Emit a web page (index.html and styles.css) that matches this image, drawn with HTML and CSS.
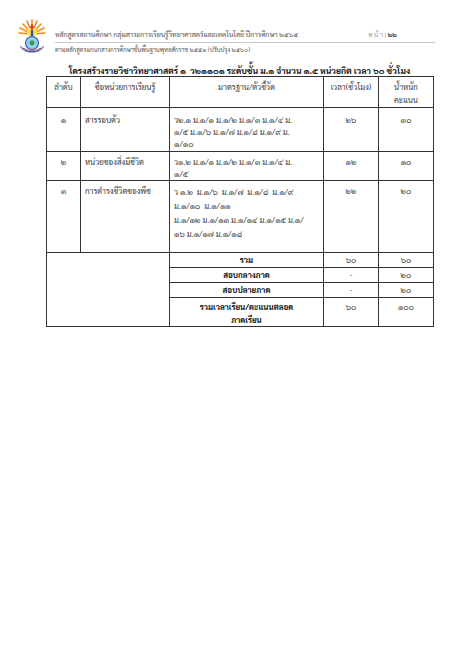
FILE: index.html
```html
<!DOCTYPE html>
<html lang="th">
<head>
<meta charset="utf-8">
<link rel="stylesheet" href="styles.css">
</head>
<body>
<div class="page">
  <div class="header">
    <svg class="logo" viewBox="0 0 28 36" width="28" height="36">
      <g stroke="#f08a1c" stroke-width="1.6" stroke-linecap="round">
        <line x1="14" y1="16" x2="14" y2="2"/>
        <line x1="14" y1="16" x2="9" y2="3"/>
        <line x1="14" y1="16" x2="19" y2="3"/>
        <line x1="14" y1="16" x2="5" y2="6"/>
        <line x1="14" y1="16" x2="23" y2="6"/>
        <line x1="14" y1="16" x2="2" y2="10"/>
        <line x1="14" y1="16" x2="26" y2="10"/>
        <line x1="14" y1="16" x2="1" y2="15"/>
        <line x1="14" y1="16" x2="27" y2="15"/>
      </g>
      <circle cx="14" cy="14" r="5" fill="#fde24a"/>
      <path d="M12 9 Q14 4 16 9 Q15 12 14 12 Q13 12 12 9Z" fill="#e8312a"/>
      <rect x="12.8" y="12" width="2.4" height="12" fill="#2b5fb0"/>
      <circle cx="14" cy="25" r="6.5" fill="#8fd0ef" stroke="#2b5fb0" stroke-width="1.2"/>
      <circle cx="14" cy="25" r="2.4" fill="#3f8f4a"/>
      <path d="M2 27 Q6 33 14 33 Q22 33 26 27 L25 30 Q20 35 14 34.5 Q8 35 3 30Z" fill="#2b5fb0"/>
      <path d="M5 30 Q14 35 23 30" stroke="#e8312a" stroke-width="0.8" fill="none"/>
    </svg>
    <div class="header-text">
      <div class="hline1">
        <span>หลักสูตรสถานศึกษา กลุ่มสาระการเรียนรู้วิทยาศาสตร์และเทคโนโลยี  ปีการศึกษา ๒๕๖๕</span>
        <span class="pageno">ห น้ า | <b>๒๒</b></span>
      </div>
      <div class="hline2">ตามหลักสูตรแกนกลางการศึกษาขั้นพื้นฐานพุทธศักราช ๒๕๕๑ (ปรับปรุง ๒๕๖๐)</div>
    </div>
  </div>

  <div class="title">โครงสร้างรายวิชาวิทยาศาสตร์ ๑&nbsp;&nbsp;ว๒๑๑๐๑ ระดับชั้น ม.๑ จำนวน ๑.๕ หน่วยกิต เวลา ๖๐ ชั่วโมง</div>

  <table class="course">
    <colgroup>
      <col class="c1"><col class="c2"><col class="c3"><col class="c4"><col class="c5">
    </colgroup>
    <tr class="r-head">
      <th>ลำดับ</th>
      <th>ชื่อหน่วยการเรียนรู้</th>
      <th>มาตรฐาน/ตัวชี้วัด</th>
      <th>เวลา(ชั่วโมง)</th>
      <th>น้ำหนัก<br>คะแนน</th>
    </tr>
    <tr class="r1">
      <td class="center">๑</td>
      <td>สารรอบตัว</td>
      <td>ว๒.๑ ม.๑/๑ ม.๑/๒ ม.๑/๓ ม.๑/๔ ม.<br>๑/๕ ม.๑/๖ ม.๑/๗ ม.๑/๘ ม.๑/๙ ม.<br>๑/๑๐</td>
      <td class="center">๒๖</td>
      <td class="center">๓๐</td>
    </tr>
    <tr class="r2">
      <td class="center">๒</td>
      <td>หน่วยของสิ่งมีชีวิต</td>
      <td>ว๑.๒ ม.๑/๑ ม.๑/๒ ม.๑/๓ ม.๑/๔ ม.<br>๑/๕</td>
      <td class="center">๑๒</td>
      <td class="center">๑๐</td>
    </tr>
    <tr class="r3">
      <td class="center">๓</td>
      <td>การดำรงชีวิตของพืช</td>
      <td class="loose">ว ๑.๒&nbsp;&nbsp;ม.๑/๖&nbsp;&nbsp;ม.๑/๗&nbsp;&nbsp;ม.๑/๘&nbsp;&nbsp;ม.๑/๙<br>ม.๑/๑๐&nbsp;&nbsp;ม.๑/๑๑<br>ม.๑/๑๒ ม.๑/๑๓ ม.๑/๑๔ ม.๑/๑๕ ม.๑/<br>๑๖ ม.๑/๑๗ ม.๑/๑๘</td>
      <td class="center">๒๒</td>
      <td class="center">๒๐</td>
    </tr>
    <tr class="rs">
      <td colspan="2" rowspan="4"></td>
      <td class="label">รวม</td>
      <td class="center">๖๐</td>
      <td class="center">๖๐</td>
    </tr>
    <tr class="rs">
      <td class="label">สอบกลางภาค</td>
      <td class="center">-</td>
      <td class="center">๒๐</td>
    </tr>
    <tr class="rs">
      <td class="label">สอบปลายภาค</td>
      <td class="center">-</td>
      <td class="center">๒๐</td>
    </tr>
    <tr class="rs-last">
      <td class="label">รวมเวลาเรียน/คะแนนตลอด<br>ภาคเรียน</td>
      <td class="center">๖๐</td>
      <td class="center">๑๐๐</td>
    </tr>
  </table>
</div>
</body>
</html>
```

FILE: styles.css
```css
html, body {
  margin: 0;
  padding: 0;
  background: #ffffff;
}

body {
  font-family: "Laksaman", "TH Sarabun New", "Sarabun", "Garuda", "Loma", "Norasi", "Tlwg Typo", "Noto Serif Thai", "Noto Sans Thai", sans-serif;
  color: #333;
}

.page {
  width: 474px;
  height: 670px;
  padding: 18px 0 0 18px;
  box-sizing: border-box;
}

.header {
  display: flex;
  align-items: flex-end;
}

.logo {
  flex: none;
  display: block;
}

.header-text {
  margin-left: 9px;
  width: 380px;
  color: #555;
  font-size: 7px;
  line-height: 10px;
}

.hline1 {
  display: flex;
  justify-content: space-between;
  align-items: baseline;
  border-bottom: 1px solid #c8c8c8;
  padding-bottom: 2px;
}

.pageno {
  margin-right: 38px;
  color: #999;
  font-size: 6.5px;
}

.pageno b {
  color: #333;
}

.hline2 {
  padding-top: 1px;
  font-size: 6.1px;
}

.title {
  margin: 11px 0 0 28px;
  width: 387px;
  text-align: center;
  font-weight: bold;
  font-size: 8.7px;
  line-height: 11px;
  color: #111;
}

.course {
  margin-left: 28px;
  width: 387px;
  border-collapse: collapse;
  table-layout: fixed;
  font-size: 8px;
  line-height: 12px;
  color: #3c3c3c;
}

.c1 { width: 34px; }
.c2 { width: 89px; }
.c3 { width: 154px; }
.c4 { width: 55px; }
.c5 { width: 55px; }

.course th,
.course td {
  border: 1px solid #333;
  padding: 0 4px;
  vertical-align: top;
  text-align: left;
}

.course th {
  text-align: center;
  font-weight: normal;
  padding-top: 5px;
}

.r-head { height: 31px; }
.r-head th { padding-top: 3px; line-height: 13px; }

.course td { padding-top: 6px; }

.r1 { height: 44px; }
.r1 td { padding-top: 6px; }
.r2 { height: 29px; }
.r2 td { padding-top: 4px; }
.r3 { height: 72px; }
.r3 td { padding-top: 4px; }
.loose { line-height: 14px; }

.course td.center { text-align: center; }

.rs { height: 15px; }
.rs td { padding-top: 1px; padding-bottom: 0; line-height: 12px; }
.rs-last { height: 29px; }
.rs-last td { padding-top: 2px; line-height: 13px; }

.course td.label {
  text-align: center;
  font-weight: bold;
  color: #111;
}
```
